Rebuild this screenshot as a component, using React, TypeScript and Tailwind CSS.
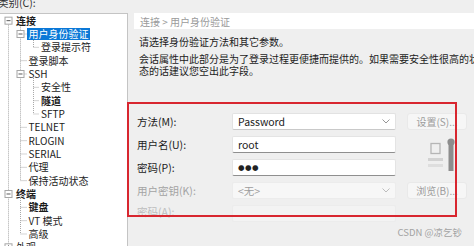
import React from "react";

type Item = { t: string; l: 0 | 1 | 2; b?: boolean; sel?: boolean };

const tree: Item[] = [
  { t: "连接", l: 0, b: true },
  { t: "用户身份验证", l: 1, sel: true },
  { t: "登录提示符", l: 2 },
  { t: "登录脚本", l: 1 },
  { t: "SSH", l: 1 },
  { t: "安全性", l: 2 },
  { t: "隧道", l: 2, b: true },
  { t: "SFTP", l: 2 },
  { t: "TELNET", l: 1 },
  { t: "RLOGIN", l: 1 },
  { t: "SERIAL", l: 1 },
  { t: "代理", l: 1 },
  { t: "保持活动状态", l: 1 },
  { t: "终端", l: 0, b: true },
  { t: "键盘", l: 1, b: true },
  { t: "VT 模式", l: 1 },
  { t: "高级", l: 1 },
  { t: "外观", l: 0 },
];

const padByLevel: Record<number, string> = {
  0: "pl-[14.5px]",
  1: "pl-[27px]",
  2: "pl-[39.5px]",
};

const RH = 13.333;
const cy = (i: number) => 6.667 + RH * i;

function Box({ x, i, plus }: { x: number; i: number; plus?: boolean }) {
  const y = cy(i);
  return (
    <g>
      <rect x={x - 3.5} y={y - 3.5} width={7} height={7} fill="#fff" stroke="#a6a6a6" strokeWidth={1} />
      <line x1={x - 2} x2={x + 2} y1={y} y2={y} stroke="#5a5a5a" strokeWidth={1} />
      {plus && <line x1={x} x2={x} y1={y - 2} y2={y + 2} stroke="#5a5a5a" strokeWidth={1} />}
    </g>
  );
}

function TreeLines() {
  const dot = { stroke: "#a8a8a8", strokeWidth: 1, strokeDasharray: "1 1" };
  const x0 = 8.5;
  const x1 = 20.5;
  const x2 = 33.5;
  const lvl1 = [1, 3, 4, 8, 9, 10, 11, 12];
  const lvl1b = [14, 15, 16];
  return (
    <svg className="absolute left-0 top-0 pointer-events-none" width={127} height={240}>
      <line x1={x0} x2={x0} y1={cy(0)} y2={cy(17)} {...dot} />
      <line x1={x1} x2={x1} y1={cy(0) + 4} y2={cy(12)} {...dot} />
      <line x1={x1} x2={x1} y1={cy(13) + 4} y2={cy(16)} {...dot} />
      {[...lvl1, ...lvl1b].map((i) => (
        <line key={i} x1={x1} x2={27} y1={cy(i)} y2={cy(i)} {...dot} />
      ))}
      <line x1={x2} x2={x2} y1={cy(1) + 4} y2={cy(2)} {...dot} />
      <line x1={x2} x2={x2} y1={cy(4) + 4} y2={cy(7)} {...dot} />
      {[2, 5, 6, 7].map((i) => (
        <line key={i} x1={x2} x2={39.5} y1={cy(i)} y2={cy(i)} {...dot} />
      ))}
      <Box x={x0} i={0} />
      <Box x={x0} i={13} />
      <Box x={x0} i={17} plus />
      <Box x={x1} i={1} />
      <Box x={x1} i={4} />
    </svg>
  );
}

function Chevron({ color }: { color: string }) {
  return (
    <svg width={8} height={5} viewBox="0 0 8 5" className="shrink-0">
      <path d="M0.5 0.5 L4 4 L7.5 0.5" fill="none" stroke={color} strokeWidth={0.9} />
    </svg>
  );
}

function UserKeyIcon() {
  return (
    <svg width={30} height={34} viewBox="0 0 30 34">
      <rect x={4} y={5.5} width={9} height={10} fill="none" stroke="#b5b5b5" strokeWidth={1.3} />
      <rect x={1} y={20} width={15} height={3} fill="#d2d2d2" />
      <rect x={1} y={26} width={15} height={3} fill="#dedede" />
      <circle cx={24} cy={4} r={3.6} fill="#8d8d8d" />
      <rect x={21.5} y={4} width={5} height={29} fill="#8d8d8d" />
    </svg>
  );
}

export default function App() {
  const font = { fontFamily: '"Noto Sans CJK SC", "Noto Sans", sans-serif' };
  return (
    <div
      className="relative flex h-[246px] w-[474px] flex-col overflow-hidden bg-[#efefef] text-[#1c1c1c]"
      style={font}
    >
      <div className="h-[13px] shrink-0 overflow-hidden">
        <div className="-mt-[4px] ml-[-2px] text-[10.5px] leading-[13px] text-[#333]">类别(C):</div>
      </div>

      <div className="flex min-h-0 flex-1">
        <div className="relative w-[128px] shrink-0 overflow-hidden border-r border-t border-[#c4c4c4] bg-white">
          <TreeLines />
          <div className="relative flex flex-col">
            {tree.map((it, i) => (
              <div key={i} className={`flex h-[13.333px] items-center ${padByLevel[it.l]}`}>
                <span
                  className={`h-[12px] whitespace-nowrap px-[1.5px] text-[10px] leading-[12px] ${
                    it.sel ? "bg-[#0a78d7] text-white" : "text-[#1c1c1c]"
                  } ${it.b ? "font-bold" : ""}`}
                >
                  {it.t}
                </span>
              </div>
            ))}
          </div>
        </div>

        <div className="flex min-w-0 flex-1 flex-col overflow-hidden pl-[6px]">
          <div className="flex h-[16px] shrink-0 items-center bg-white pl-[6px] text-[10px] text-[#9a9a9a] whitespace-nowrap">
            连接 &gt; 用户身份验证
          </div>

          <div className="mt-[7px] pl-[5px] text-[10px] leading-[12px] whitespace-nowrap">
            请选择身份验证方法和其它参数。
          </div>
          <div className="mt-[5px] pl-[5px] text-[10px] leading-[11.5px] whitespace-nowrap">
            <div>会话属性中此部分是为了登录过程更便捷而提供的。如果需要安全性很高的状</div>
            <div>态的话建议您空出此字段。</div>
          </div>

          <div className="mt-[37px] grid grid-cols-[84px_164px_60px] grid-rows-[17px_17px_17px_17px_17px] gap-x-[11px] pl-[3px] text-[10.5px] [row-gap:6px]">
            <div className="flex items-center whitespace-nowrap">方法(M):</div>
            <div className="flex items-center justify-between rounded-[2px] border border-[#e2e2e2] border-b-[#c9c9c9] bg-white pl-[5px] pr-[5px]">
              <span>Password</span>
              <Chevron color="#8a8a8a" />
            </div>
            <div className="flex items-center justify-center rounded-[3px] border border-[#e9e9e9] bg-[#f6f6f6] text-[10px] text-[#9c9c9c] whitespace-nowrap">
              设置(S)...
            </div>

            <div className="flex items-center whitespace-nowrap">用户名(U):</div>
            <div className="flex items-center rounded-[2px] border border-[#e4e4e4] border-b-[#8f8f8f] bg-white pl-[5px]">
              root
            </div>
            <div className="row-span-2 flex items-center pl-[20px] pb-[2px]">
              <UserKeyIcon />
            </div>

            <div className="flex items-center whitespace-nowrap">密码(P):</div>
            <div className="flex items-center rounded-[2px] border border-[#e4e4e4] border-b-[#8f8f8f] bg-white pl-[5px]">
              <span className="text-[7.5px] tracking-[0.5px] text-[#222]" style={{ fontFamily: '"DejaVu Sans", sans-serif' }}>
                ●●●
              </span>
            </div>

            <div className="flex items-center whitespace-nowrap text-[#a3a3a3]">用户密钥(K):</div>
            <div className="flex items-center justify-between rounded-[2px] border border-[#ececec] bg-[#f7f7f7] pl-[5px] pr-[5px] text-[#9d9d9d]">
              <span>&lt;无&gt;</span>
              <Chevron color="#b5b5b5" />
            </div>
            <div className="flex items-center justify-center rounded-[3px] border border-[#e9e9e9] bg-[#f6f6f6] text-[10px] text-[#9c9c9c] whitespace-nowrap">
              浏览(B)...
            </div>

            <div className="-mt-[4px] flex items-center whitespace-nowrap text-[#bdbdbd]">密码(A):</div>
            <div className="rounded-[2px] border border-[#ececec] bg-[#f3f3f3]"></div>
            <div></div>
          </div>

          <div className="mt-[3px] flex justify-end pr-[12px] text-[9.5px] text-[#a2a2a2] whitespace-nowrap">
            CSDN @凉乞钞
          </div>
        </div>
      </div>

      <div className="pointer-events-none absolute left-[127px] top-[102px] h-[115px] w-[330px] border-2 border-[#d8262f]" />
    </div>
  );
}
